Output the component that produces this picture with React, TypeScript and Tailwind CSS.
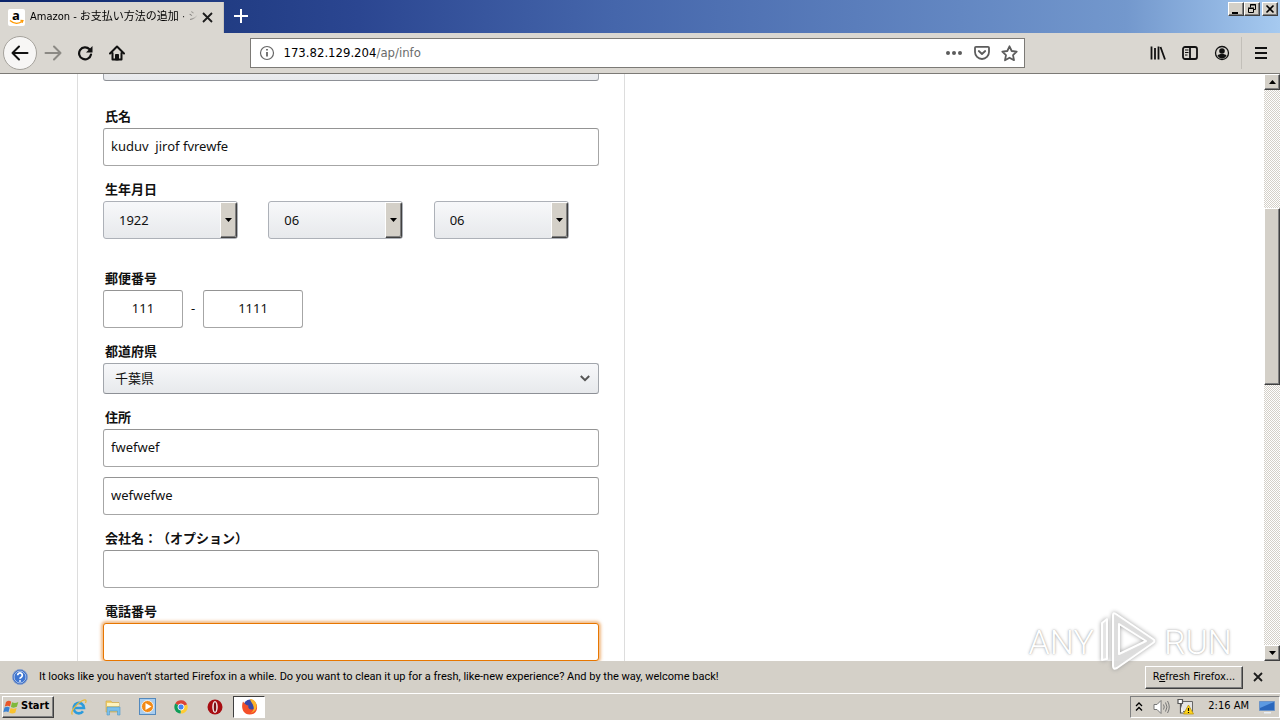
import React from 'react';
import clsx from 'clsx';

const UI_FONT = "font-['DejaVu_Sans_Condensed','Noto_Sans_CJK_JP',sans-serif]";
const RAISED =
  'bg-[#d4d0c8] border border-t-white border-l-white border-r-[#404040] border-b-[#404040] shadow-[inset_-1px_-1px_0_#808080]';

const YEARS = ['1922', '1923', '1924', '1925'];
const NUMBERS = ['06', '07', '08', '09'];

/* Window title bar */
const TabStrip = () => (
  <header className="flex h-[33px] shrink-0 items-stretch bg-[linear-gradient(90deg,#0a246a_0%,#1f3a80_15%,#2b4691_28%,#4566ab_48%,#6387c2_75%,#7398cd_88%,#a6caf0_100%)]">
    <div className="mt-0.5 flex w-[224px] items-center border-r border-[#c8c5bf] bg-[#dad7d1] pl-2">
      <svg width="17" height="17" viewBox="0 0 17 17" className="shrink-0 overflow-visible">
        <rect width="17" height="17" rx="2" fill="#fff" />
        <text x="4" y="11" fontSize="13" fontWeight="bold" fontFamily="Open Sans, sans-serif">a</text>
        <path d="M2 11.500c4 3.500 9 3.500 12.500.5M12.500 11.500l2.300.2-.8 2" fill="none" stroke="#f90" strokeWidth="1.400" />
      </svg>
      <div className="ml-[5px] flex-1 whitespace-nowrap text-[11px] [mask-image:linear-gradient(90deg,#000_88%,transparent_98%)]">
        Amazon - お支払い方法の追加 · シ
      </div>
      <button aria-label="Close tab" className="mr-[10px] flex size-3 shrink-0 items-center justify-center">
        <svg width="11" height="11" viewBox="0 0 11 11" stroke="#1c1c1c" strokeWidth="1.800">
          <path d="M1 1l9 9M10 1l-9 9" />
        </svg>
      </button>
    </div>
    <button aria-label="New tab" className="-mt-px flex w-[34px] items-center justify-center">
      <svg width="14" height="14" viewBox="0 0 14 14" stroke="#fff" strokeWidth="2">
        <path d="M7 0v14M0 7h14" />
      </svg>
    </button>
    <div className="ml-auto flex items-start pt-0.5 pr-0.5">
      <button aria-label="Minimize" className={clsx(RAISED, 'h-[14px] w-4')}>
        <svg width="14" height="12" viewBox="0 0 14 12">
          <path d="M3 9h6v2H3z" />
        </svg>
      </button>
      <button aria-label="Restore" className={clsx(RAISED, 'h-[14px] w-4')}>
        <svg width="14" height="12" viewBox="0 0 14 12" fill="none" stroke="#000">
          <path d="M5.500 4.500v-3h5v5h-2M5 2h6M3.500 5.500h5v4h-5zM3 5h6" />
        </svg>
      </button>
      <button aria-label="Close" className={clsx(RAISED, 'ml-0.5 h-[14px] w-4')}>
        <svg width="14" height="12" viewBox="0 0 14 12" stroke="#000" strokeWidth="1.600">
          <path d="M3.500 2.500l7 7M10.500 2.500l-7 7" />
        </svg>
      </button>
    </div>
  </header>
);

const ToolButton = ({ label, children }: { label: string; children: React.ReactNode }) => (
  <button aria-label={label} className="flex size-8 items-center justify-center">
    {children}
  </button>
);

const NavBar = () => (
  <nav className="flex h-[41px] shrink-0 items-center border-b border-[#7c7a76] bg-[#dad7d1] pl-[3px]">
    <button
      aria-label="Back"
      className="flex size-[34px] items-center justify-center rounded-full border border-[#a5a29c] bg-[#f7f6f5]"
    >
      <svg width="18" height="16" viewBox="0 0 18 16" fill="none" stroke="#111" strokeWidth="2" strokeLinecap="round" strokeLinejoin="round">
        <path d="M16.500 8h-15M8 1.500L1.500 8 8 14.500" />
      </svg>
    </button>
    <ToolButton label="Forward">
      <svg width="18" height="16" viewBox="0 0 18 16" fill="none" stroke="#8b8984" strokeWidth="2" strokeLinecap="round" strokeLinejoin="round">
        <path d="M1.500 8h15M10 1.500L16.500 8 10 14.500" />
      </svg>
    </ToolButton>
    <ToolButton label="Reload">
      <svg width="16" height="16" viewBox="0 0 16 16">
        <path d="M12.500 4.200A6 6 0 1 0 14 9.500" fill="none" stroke="#111" strokeWidth="2.200" strokeLinecap="round" />
        <path d="M15.500 1v6.500H9z" fill="#111" />
      </svg>
    </ToolButton>
    <ToolButton label="Home">
      <svg width="16" height="16" viewBox="0 0 16 16" fill="none" stroke="#111" strokeWidth="2" strokeLinecap="round" strokeLinejoin="round">
        <path d="M1 8.500L8 1.500l7 7M3.500 8v6.500h9V8" />
        <path d="M6.500 14.500V9.500h3v5z" fill="#111" strokeWidth="1" />
      </svg>
    </ToolButton>
    <div className="mx-[9.2%] flex h-[30px] flex-1 items-center border border-[#7c7a76] bg-white px-2">
      <svg width="16" height="16" viewBox="0 0 16 16" fill="none" stroke="#666">
        <circle cx="8" cy="8" r="6.500" strokeWidth="1.200" />
        <path d="M8 7v4.500M8 4v1.600" strokeWidth="1.800" />
      </svg>
      <div className="ml-2 text-[13px]">
        173.82.129.204<span className="text-[#6b6b6b]">/ap/info</span>
      </div>
      <div className="-mr-2 ml-auto flex">
        <button aria-label="Page actions" className="flex w-7 items-center justify-center">
          <svg width="16" height="4" viewBox="0 0 16 4" fill="#5c5c5c">
            <circle cx="2" cy="2" r="2" />
            <circle cx="8" cy="2" r="2" />
            <circle cx="14" cy="2" r="2" />
          </svg>
        </button>
        <button aria-label="Save to Pocket" className="flex w-7 items-center justify-center">
          <svg width="16" height="16" viewBox="0 0 16 16" fill="none" stroke="#5c5c5c" strokeWidth="1.800" strokeLinecap="round" strokeLinejoin="round">
            <path d="M2 1.800h12q1 0 1 1V7a7 7 0 0 1-14 0V2.800q0-1 1-1zM4.800 6L8 9l3.200-3" />
          </svg>
        </button>
        <button aria-label="Bookmark this page" className="flex w-7 items-center justify-center">
          <svg width="17" height="17" viewBox="0 0 17 17" fill="none" stroke="#5c5c5c" strokeWidth="1.800" strokeLinejoin="round">
            <path d="M8.500 1.300l2.200 4.700 5 .6-3.700 3.500 1 5.100-4.500-2.500L4 15.200l1-5.100L1.300 6.600l5-.6z" />
          </svg>
        </button>
      </div>
    </div>
    <ToolButton label="Library">
      <svg width="16" height="16" viewBox="0 0 16 16" fill="none" stroke="#111" strokeWidth="1.800">
        <path d="M1.500 1.500v13M5 3v11.500M8.500 1.500v13M10.500 2l4.500 12.500" />
      </svg>
    </ToolButton>
    <ToolButton label="Sidebars">
      <svg width="16" height="16" viewBox="0 0 16 16" fill="none" stroke="#111" strokeWidth="1.800">
        <rect x="1" y="2" width="14" height="12" rx="2" />
        <path d="M8 2v12" />
        <path d="M3 5h3.500M3 7.500h3.500M3 10h2.500" strokeWidth="1" />
      </svg>
    </ToolButton>
    <ToolButton label="Account">
      <svg width="16" height="16" viewBox="0 0 16 16">
        <circle cx="8" cy="8" r="6.500" fill="none" stroke="#111" strokeWidth="1.300" />
        <circle cx="8" cy="6" r="2.800" fill="#111" />
        <path d="M3.500 10.500c1-1 2-1.500 4.500-1.500s3.500.5 4.500 1.500c-1 2-2.500 3-4.500 3s-3.500-1-4.500-3z" fill="#111" />
      </svg>
    </ToolButton>
    <div className="ml-[3px] flex h-8 w-[39px] items-center justify-center border-l border-[#c2bfb9]">
      <button aria-label="Open menu">
        <svg width="12" height="12" viewBox="0 0 12 12" stroke="#111" strokeWidth="2">
          <path d="M0 1h12M0 6h12M0 11h12" />
        </svg>
      </button>
    </div>
  </nav>
);

interface FieldProps {
  id: string;
  label: string;
  className?: string;
  children: React.ReactNode;
}

const Field = ({ id, label, className, children }: FieldProps) => (
  <div className={className || 'mt-3.5'}>
    <label
      htmlFor={id}
      className="mb-[3px] block pl-0.5 text-[13px] leading-[18px] font-bold [text-spacing-trim:space-all]"
    >
      {label}
    </label>
    {children}
  </div>
);

const TextInput = ({ className, ...rest }: React.InputHTMLAttributes<HTMLInputElement>) => (
  <input
    type="text"
    className={clsx(
      'block h-[38px] rounded-[3px] border border-[#a6a6a6] border-t-[#949494] bg-white px-[7px] pb-0.5 text-[13px] outline-none',
      className || 'w-full'
    )}
    {...rest}
  />
);

/* Small select with the classic raised arrow button */
const DateSelect = ({ id, label, options }: { id: string; label: string; options: string[] }) => (
  <div className="relative w-[135px]">
    <select
      id={id}
      aria-label={label}
      className="h-[38px] w-full appearance-none rounded-[3px] border border-[#adb1b8] bg-linear-to-b from-[#f7f8fa] to-[#e7e9ec] pt-0.5 pl-[15px] text-[13px]"
    >
      {options.map((option) => (
        <option key={option}>{option}</option>
      ))}
    </select>
    <span className={clsx(RAISED, 'pointer-events-none absolute inset-y-px right-px flex w-[17px] items-center justify-center rounded-r-[2px]')}>
      <svg width="7" height="4" viewBox="0 0 7 4">
        <path d="M0 0h7L3.500 4z" />
      </svg>
    </span>
  </div>
);

const WIDE_SELECT =
  'h-[31px] w-full appearance-none rounded-[3px] border border-[#a2a6ac] border-b-[#8d9096] bg-linear-to-b from-[#f7f8fa] to-[#e7e9ec] pl-[11px] text-[13px]';

const PaymentForm = () => (
  <form className="ml-[77px] w-[548px] shrink-0 self-stretch border-x border-[#ddd] px-[25px]">
    <select aria-label="国" className={clsx(WIDE_SELECT, '-mt-6 block')} />
    <Field id="name" label="氏名" className="mt-[26px]">
      <TextInput id="name" defaultValue="kuduv  jirof fvrewfe" />
    </Field>
    <Field id="birth-year" label="生年月日">
      <div className="grid grid-cols-3">
        <DateSelect id="birth-year" label="年" options={YEARS} />
        <DateSelect id="birth-month" label="月" options={NUMBERS} />
        <DateSelect id="birth-day" label="日" options={NUMBERS} />
      </div>
    </Field>
    <Field id="zip1" label="郵便番号" className="mt-[30px]">
      <div className="flex items-center text-[13px]">
        <TextInput id="zip1" defaultValue="111" className="w-20 text-center" />
        <span className="w-5 text-center">-</span>
        <TextInput aria-label="郵便番号 (後半)" defaultValue="1111" className="w-[100px] text-center" />
      </div>
    </Field>
    <Field id="state" label="都道府県">
      <div className="relative">
        <select id="state" className={clsx(WIDE_SELECT, 'block')}>
          <option>千葉県</option>
          <option>東京都</option>
        </select>
        <svg width="10" height="7" viewBox="0 0 10 7" className="pointer-events-none absolute top-3 right-[9px]" fill="none" stroke="#555" strokeWidth="2">
          <path d="M.8 1L5 5.200 9.200 1" />
        </svg>
      </div>
    </Field>
    <Field id="address1" label="住所">
      <TextInput id="address1" defaultValue="fwefwef" />
      <TextInput aria-label="住所 2" defaultValue="wefwefwe" className="mt-2.5 w-full" />
    </Field>
    <Field id="company" label="会社名：（オプション）">
      <TextInput id="company" />
    </Field>
    <Field id="phone" label="電話番号">
      <TextInput id="phone" className="w-full border-[#e77600]! shadow-[0_0_3px_2px_rgba(228,121,17,0.5)]" />
    </Field>
  </form>
);

const ScrollBar = () => (
  <div className="ml-auto flex w-4 shrink-0 flex-col bg-[repeating-conic-gradient(#ffffff_0_25%,#d4d0c8_0_50%)] bg-size-[2px_2px]">
    <button aria-label="Scroll up" className={clsx(RAISED, 'flex h-4 items-center justify-center')}>
      <svg width="7" height="4" viewBox="0 0 7 4">
        <path d="M0 4h7L3.500 0z" />
      </svg>
    </button>
    <div className="grow-[118]" />
    <div className={clsx(RAISED, 'grow-[176]')} />
    <div className="grow-[261]" />
    <button aria-label="Scroll down" className={clsx(RAISED, 'flex h-4 items-center justify-center')}>
      <svg width="7" height="4" viewBox="0 0 7 4">
        <path d="M0 0h7L3.500 4z" />
      </svg>
    </button>
  </div>
);

const Watermark = () => (
  <div className="pointer-events-none absolute right-12 bottom-[46px] flex items-center font-[Roboto,sans-serif] text-[34px] leading-[64px] font-light text-white [text-shadow:0_0_3px_#aaa,0_0_1px_#bbb]">
    <span>ANY</span>
    <svg width="62" height="64" viewBox="0 0 62 64" fill="none" strokeLinejoin="round" className="mx-1 drop-shadow-[0_0_2px_#999]">
      <path d="M4 50V13l5-4v40z" fill="#f2f2f2" fillOpacity=".8" stroke="#fff" strokeWidth="2" />
      <path
        d="M15 53V5q0-3 3-1l37 25q3 2 0 4L19 58q-4 2-4-2zM21 44V14l27 17z"
        fill="#ececec"
        fillOpacity=".75"
        fillRule="evenodd"
        stroke="#fff"
        strokeWidth="2"
      />
    </svg>
    <span>RUN</span>
  </div>
);

const NotificationBar = () => (
  <div className="flex h-8 shrink-0 items-center bg-[#d4d0c8] pr-3.5 pl-3 text-[11px]">
    <svg width="16" height="16" viewBox="0 0 16 16" className="shrink-0">
      <circle cx="8" cy="8" r="7.500" fill="#2458b8" stroke="#8ba4cf" />
      <circle cx="8" cy="8" r="6" fill="#3d75d2" stroke="#e7effb" strokeWidth=".7" />
      <path d="M5.700 6.200a2.300 2.300 0 1 1 3.500 2Q8 8.800 8 9.800M8 11.200v1.600" fill="none" stroke="#fff" strokeWidth="1.700" />
    </svg>
    <p className="ml-[11px] whitespace-nowrap font-[Roboto,sans-serif]">
      It looks like you haven’t started Firefox in a while. Do you want to clean it up for a fresh, like-new experience? And by the way, welcome back!
    </p>
    <button className={clsx(RAISED, 'ml-auto h-[23px] w-[98px] shrink-0 whitespace-nowrap')}>
      R<u>e</u>fresh Firefox...
    </button>
    <button aria-label="Close notification" className="ml-[7px] flex size-4 items-center justify-center">
      <svg width="10" height="10" viewBox="0 0 10 10" stroke="#1c1c1c" strokeWidth="1.800">
        <path d="M1 1l8 8M9 1L1 9" />
      </svg>
    </button>
  </div>
);

const InternetExplorerIcon = () => (
  <svg width="18" height="18" viewBox="0 0 18 18" fill="none">
    <path d="M4.500 10h9.500a5.200 5.200 0 1 0-1 3.200" stroke="#2c9bdc" strokeWidth="2.600" />
    <path d="M2.500 16.500c-3-2 4-11 10-14 3-1.500 4.500-.5 3 2.500" stroke="#e9b93a" strokeWidth="1.300" />
  </svg>
);

const ExplorerIcon = () => (
  <svg width="18" height="18" viewBox="0 0 18 18">
    <path d="M2 3h5l1 1.500h7V14H2z" fill="#f1cf68" stroke="#cda544" strokeWidth=".6" />
    <path d="M3 5h12v3H3z" fill="#fff3bd" />
    <path d="M3 9h13v8h-2.500v-4h-8v4H3z" fill="#7cc0ea" stroke="#4f99c9" strokeWidth=".6" />
  </svg>
);

const MediaPlayerIcon = () => (
  <svg width="17" height="17" viewBox="0 0 17 17">
    <rect x=".5" y=".5" width="16" height="16" fill="#a9cdee" stroke="#5389bd" />
    <circle cx="8.500" cy="8.500" r="6" fill="#f28a16" stroke="#fff" strokeWidth=".8" />
    <path d="M6.500 5l6 3.500-6 3.500z" fill="#fff" />
  </svg>
);

const ChromeIcon = () => (
  <svg width="14" height="14" viewBox="0 0 16 16">
    <path d="M8 8L1.500 4A7.500 7.500 0 0 1 15 5z" fill="#db4437" />
    <path d="M8 8l7-3a7.500 7.500 0 0 1-7.500 10.500z" fill="#fc3" />
    <path d="M8 8l-.5 7.500A7.500 7.500 0 0 1 1.500 4z" fill="#0f9d58" />
    <circle cx="8" cy="8" r="3.500" fill="#4285f4" stroke="#fff" />
  </svg>
);

const OperaIcon = () => (
  <svg width="16" height="16" viewBox="0 0 16 16">
    <circle cx="8" cy="8" r="7.500" fill="#a80d12" />
    <ellipse cx="8" cy="8" rx="2.800" ry="6" fill="#efe4e4" />
    <ellipse cx="8" cy="8" rx="1.200" ry="4.800" fill="#7a1014" />
  </svg>
);

const FirefoxIcon = () => (
  <svg width="17" height="17" viewBox="0 0 17 17">
    <circle cx="9" cy="8" r="6.500" fill="#3848a8" />
    <path d="M2 3.500C0 8 1 16.500 8.500 16.500S17 10 15.500 6c-.5 3-1.500 5-4 5.500-3 .6-5-1.500-4-4-2 0-3.500-1.500-5.500-4z" fill="#f4502a" />
    <path d="M9 1c3 0 6 2.500 6.500 5.500.8 4-2 8-6 8.500 3-2 3.800-4 3-6.500C12 5.500 9.500 4 9 1z" fill="#fdb32a" />
  </svg>
);

const QUICK_LAUNCH = [
  { name: 'Internet Explorer', Icon: InternetExplorerIcon },
  { name: 'Windows Explorer', Icon: ExplorerIcon },
  { name: 'Media Player', Icon: MediaPlayerIcon },
  { name: 'Google Chrome', Icon: ChromeIcon },
  { name: 'Opera', Icon: OperaIcon },
];

const TaskBar = () => (
  <footer className="flex h-[27px] shrink-0 items-center border-t border-white bg-[#d4d0c8] pt-px pb-0.5 text-[11px]">
    <button className={clsx(RAISED, 'ml-0.5 flex h-[22px] w-[52px] items-center gap-px font-bold')}>
      <svg width="17" height="16" viewBox="0 0 17 16" className="shrink-0">
        <path d="M3 3c2-1.500 3.500-1.500 5.200-.3L7 7.500C5.500 6.400 4 6.500 1.800 7.500z" fill="#e8572a" />
        <path d="M9 3.200c2 1.200 4 1 6.300-.2l-1.400 4.800c-2 1-4 1.200-6 .1z" fill="#7fb93c" />
        <path d="M1.500 8.500C3.500 7.400 5 7.400 6.700 8.500l-1.300 4.700C4 12.200 2.300 12.300.3 13.200z" fill="#3a82d2" />
        <path d="M7.600 9c2 1 4 .9 6-.1l-1.300 4.800c-2 1-4 1.100-6 0z" fill="#f9c22e" />
      </svg>
      Start
    </button>
    <div className="mr-px ml-2 flex">
      {QUICK_LAUNCH.map(({ name, Icon }) => (
        <button key={name} aria-label={name} className="flex w-[34px] items-center justify-center">
          <Icon />
        </button>
      ))}
    </div>
    <button
      aria-label="Firefox"
      className="flex h-[22px] w-8 items-center justify-center border border-t-[#404040] border-r-white border-b-white border-l-[#404040] bg-white"
    >
      <FirefoxIcon />
    </button>
    <div className="ml-auto flex h-[22px] w-[150px] items-center border border-t-[#808080] border-r-white border-b-white border-l-[#808080] px-1">
      <svg width="8" height="10" viewBox="0 0 8 10" fill="none" stroke="#000" strokeWidth="1.300">
        <path d="M1 4l3-3 3 3M1 8.500l3-3 3 3" />
      </svg>
      <svg width="17" height="16" viewBox="0 0 17 16" fill="none" stroke="#777" className="ml-2.5">
        <path d="M1 5.500h3l4-4v13l-4-4H1z" fill="#fff" />
        <path d="M10.500 5.500q1.500 2.500 0 5M12.500 3.500q3 4.500 0 9M14.500 2q3.500 6 0 12" />
      </svg>
      <svg width="17" height="17" viewBox="0 0 17 17" className="ml-[7px]">
        <path d="M4.500 3.500h11v10h-11z" fill="#e4e4e4" stroke="#666" />
        <path d="M1 1.500h4.500v4H1zM3.500 5.500V15h3" fill="#fff" stroke="#555" strokeWidth="1.200" />
        <path d="M11.500 7l5 9h-10z" fill="#ffd51c" stroke="#b48c00" strokeWidth=".7" />
        <path d="M11.500 10v3M11.500 14v1" stroke="#000" strokeWidth="1.200" />
      </svg>
      <time className="ml-auto whitespace-nowrap">2:16 AM</time>
      <svg width="16" height="14" viewBox="0 0 16 14" className="ml-2.5 shrink-0">
        <path d="M.5 1.500h15v9H.5z" fill="#2b68bd" stroke="#6d94c7" />
        <path d="M1 2h14L1 8z" fill="#5c9ae2" />
        <path d="M5 12h7v1.500H5z" fill="#e9eef5" />
      </svg>
    </div>
  </footer>
);

export default function App() {
  return (
    <div className={clsx(UI_FONT, 'relative flex h-screen flex-col overflow-hidden bg-white text-black')}>
      <TabStrip />
      <NavBar />
      <main className="flex min-h-0 flex-1 overflow-hidden font-['Noto_Sans','Noto_Sans_CJK_JP',sans-serif] text-[#111]">
        <PaymentForm />
        <ScrollBar />
      </main>
      <NotificationBar />
      <TaskBar />
      <Watermark />
    </div>
  );
}
